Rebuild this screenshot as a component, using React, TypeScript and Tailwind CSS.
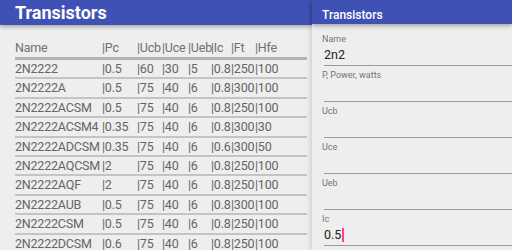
const columns = ['Name', '|Pc', '|Ucb', '|Uce', '|Ueb', '|Ic', '|Ft', '|Hfe'];

const rows = [
    ['2N2222', '|0.5', '|60', '|30', '|5', '|0.8', '|250', '|100'],
    ['2N2222A', '|0.5', '|75', '|40', '|6', '|0.8', '|300', '|100'],
    ['2N2222ACSM', '|0.5', '|75', '|40', '|6', '|0.8', '|250', '|100'],
    ['2N2222ACSM4', '|0.35', '|75', '|40', '|6', '|0.8', '|300', '|30'],
    ['2N2222ADCSM', '|0.35', '|75', '|40', '|6', '|0.6', '|300', '|50'],
    ['2N2222AQCSM', '|2', '|75', '|40', '|6', '|0.8', '|250', '|100'],
    ['2N2222AQF', '|2', '|75', '|40', '|6', '|0.8', '|250', '|100'],
    ['2N2222AUB', '|0.5', '|75', '|40', '|6', '|0.8', '|300', '|100'],
    ['2N2222CSM', '|0.5', '|75', '|40', '|6', '|0.8', '|250', '|100'],
    ['2N2222DCSM', '|0.6', '|75', '|40', '|6', '|0.8', '|250', '|100'],
];

const fields = [
    { label: 'Name', value: '2n2' },
    { label: 'P, Power, watts', value: '' },
    { label: 'Ucb', value: '' },
    { label: 'Uce', value: '' },
    { label: 'Ueb', value: '' },
    { label: 'Ic', value: '0.5', focused: true },
];

const gridCols =
    'grid grid-cols-[87px_35px_25px_26px_23px_20px_24px_1fr] whitespace-nowrap';

function TableRow({ cells, header }: { cells: string[]; header?: boolean }) {
    return (
        <div
            className={
                header
                    ? `${gridCols} h-[21px] border-b-[3px] border-[#b3b3b3] leading-[18px] text-[#707070]`
                    : `${gridCols} h-[19.4px] border-b-2 border-[#c4c4c4] leading-[17.4px] text-[#656565]`
            }
        >
            {cells.map((cell, i) => (
                <span key={i}>{cell}</span>
            ))}
        </div>
    );
}

function Field({
    label,
    value,
    focused,
}: {
    label: string;
    value: string;
    focused?: boolean;
}) {
    return (
        <div className="mb-[4px]">
            <div className="h-[10px] pl-[10px] text-[9px] leading-[10px] text-[#757575]">
                {label}
            </div>
            <div className="ml-[12px] mt-[3px] border-b border-[#9a9a9a] pb-[2px]">
                <div className="flex h-[16px] items-center text-[12.5px] leading-[16px] text-[#222]">
                    {value}
                    {focused && (
                        <span className="ml-[1px] inline-block h-[14px] w-[1.5px] bg-[#ff4081]" />
                    )}
                </div>
            </div>
        </div>
    );
}

export default function App() {
    return (
        <div
            className="flex h-[250px] w-[512px] overflow-hidden bg-[#eeeeee]"
            style={{ fontFamily: 'Roboto, "Noto Sans", sans-serif' }}
        >
            {/* List screen */}
            <div className="flex w-[312px] flex-none flex-col">
                <div className="relative z-10 h-[37px] bg-[#3f51b5] pl-[15px] shadow-[0_2px_4px_rgba(0,0,0,0.3)]">
                    <h1 className="pt-[1px] text-[18px] leading-[24px] font-bold text-white">
                        Transistors
                    </h1>
                </div>
                <div className="ml-[15px] mr-[5px] mt-[14px] text-[12.5px] tracking-[-0.2px]">
                    <TableRow cells={columns} header />
                    {rows.map((row) => (
                        <TableRow key={row[0]} cells={row} />
                    ))}
                </div>
            </div>

            {/* Edit screen */}
            <div className="relative z-20 flex min-w-0 grow flex-col bg-[#eeeeee] shadow-[-2px_0_4px_rgba(0,0,0,0.12)]">
                <div className="relative z-10 h-[31px] bg-[#3f51b5] pl-[10px] shadow-[0_2px_4px_rgba(0,0,0,0.3)]">
                    <h2 className="pt-[8px] text-[12px] leading-[14px] font-medium text-white">
                        Transistors
                    </h2>
                </div>
                <div className="pt-[10px]">
                    {fields.map((field) => (
                        <Field key={field.label} {...field} />
                    ))}
                </div>
            </div>
        </div>
    );
}
